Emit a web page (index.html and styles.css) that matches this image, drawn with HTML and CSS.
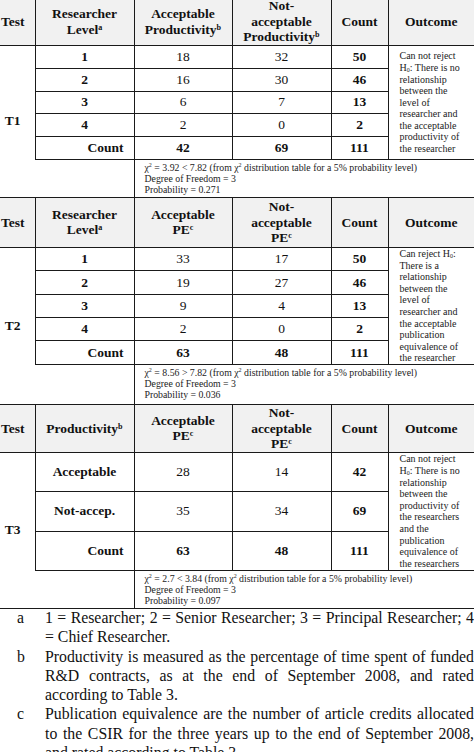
FILE: index.html
```html
<!DOCTYPE html>
<html>
<head>
<meta charset="utf-8">
<link rel="stylesheet" href="styles.css">
</head>
<body>
<table class="tbl">
<colgroup><col class="c1"><col class="c2"><col class="c3"><col class="c4"><col class="c5"><col class="c6"></colgroup>
<tr class="hd h48">
<th class="first">Test</th><th>Researcher<br>Level<sup>a</sup></th><th>Acceptable<br>Productivity<sup>b</sup></th><th>Not-<br>acceptable<br>Productivity<sup>b</sup></th><th>Count</th><th class="last">Outcome</th>
</tr>
<tr class="r5"><td class="test" rowspan="6">T1</td><td class="b">1</td><td>18</td><td>32</td><td class="b">50</td><td class="out" rowspan="5">Can not reject H<sub>0</sub>: There is no relationship between the level of researcher and the acceptable productivity of the researcher</td></tr>
<tr class="r5"><td class="b">2</td><td>16</td><td>30</td><td class="b">46</td></tr>
<tr class="r5"><td class="b">3</td><td>6</td><td>7</td><td class="b">13</td></tr>
<tr class="r5"><td class="b">4</td><td>2</td><td>0</td><td class="b">2</td></tr>
<tr class="r5"><td class="b lbl">Count</td><td class="b">42</td><td class="b">69</td><td class="b">111</td></tr>
<tr class="note n36"><td class="blank"></td><td class="nt" colspan="4">χ<sup>2</sup> = 3.92 &lt; 7.82 (from χ<sup>2</sup> distribution table for a 5% probability level)<br>Degree of Freedom = 3<br>Probability = 0.271</td></tr>

<tr class="hd h50">
<th class="first">Test</th><th>Researcher<br>Level<sup>a</sup></th><th>Acceptable<br>PE<sup>c</sup></th><th>Not-<br>acceptable<br>PE<sup>c</sup></th><th>Count</th><th class="last">Outcome</th>
</tr>
<tr class="r5"><td class="test" rowspan="6">T2</td><td class="b">1</td><td>33</td><td>17</td><td class="b">50</td><td class="out" rowspan="5">Can reject H<sub>0</sub>: There is a relationship between the level of researcher and the acceptable publication equivalence of the researcher</td></tr>
<tr class="r5"><td class="b">2</td><td>19</td><td>27</td><td class="b">46</td></tr>
<tr class="r5"><td class="b">3</td><td>9</td><td>4</td><td class="b">13</td></tr>
<tr class="r5"><td class="b">4</td><td>2</td><td>0</td><td class="b">2</td></tr>
<tr class="r5"><td class="b lbl">Count</td><td class="b">63</td><td class="b">48</td><td class="b">111</td></tr>
<tr class="note n38"><td class="blank"></td><td class="nt" colspan="4">χ<sup>2</sup> = 8.56 &gt; 7.82 (from χ<sup>2</sup> distribution table for a 5% probability level)<br>Degree of Freedom = 3<br>Probability = 0.036</td></tr>

<tr class="hd h48">
<th class="first">Test</th><th>Productivity<sup>b</sup></th><th>Acceptable<br>PE<sup>c</sup></th><th>Not-<br>acceptable<br>PE<sup>c</sup></th><th>Count</th><th class="last">Outcome</th>
</tr>
<tr class="r3"><td class="test" rowspan="4">T3</td><td class="b">Acceptable</td><td>28</td><td>14</td><td class="b">42</td><td class="out" rowspan="3">Can not reject H<sub>0</sub>: There is no relationship between the productivity of the researchers and the publication equivalence of the researchers</td></tr>
<tr class="r3"><td class="b">Not-accep.</td><td>35</td><td>34</td><td class="b">69</td></tr>
<tr class="r3"><td class="b lbl">Count</td><td class="b">63</td><td class="b">48</td><td class="b">111</td></tr>
<tr class="note n36"><td class="blank"></td><td class="nt" colspan="4">χ<sup>2</sup> = 2.7 &lt; 3.84 (from χ<sup>2</sup> distribution table for a 5% probability level)<br>Degree of Freedom = 3<br>Probability = 0.097</td></tr>
</table>

<div class="fns">
<div class="fn"><span class="key">a</span><span class="txt">1 = Researcher; 2 = Senior Researcher; 3 = Principal Researcher; 4 = Chief Researcher.</span></div>
<div class="fn"><span class="key">b</span><span class="txt">Productivity is measured as the percentage of time spent of funded R&amp;D contracts, as at the end of September 2008, and rated according to Table 3.</span></div>
<div class="fn"><span class="key">c</span><span class="txt">Publication equivalence are the number of article credits allocated to the CSIR for the three years up to the end of September 2008, and rated according to Table 3.</span></div>
</div>
</body>
</html>
```
FILE: styles.css
```css
html, body {
  margin: 0;
  padding: 0;
  background: #ffffff;
}
body {
  font-family: "Liberation Serif", "Times New Roman", serif;
  color: #111;
  width: 474px;
  overflow: hidden;
}
.tbl {
  border-collapse: collapse;
  table-layout: fixed;
  width: 474px;
  margin-top: -3px;
}
.c1 { width: 35px; }
.c2 { width: 99px; }
.c3 { width: 98px; }
.c4 { width: 99px; }
.c5 { width: 57px; }
.c6 { width: 86px; }

.tbl th, .tbl td {
  border: 1px solid #1a1a1a;
  padding: 0 4px;
  text-align: center;
  vertical-align: middle;
  font-size: 13.5px;
}
.tbl th {
  background: #f1f1f1;
  font-weight: bold;
  line-height: 15.5px;
}
.tbl th.first, .tbl td.test { border-left: none; padding: 0 9px 0 0; }
.tbl th.last, .tbl td.out, .tbl td.nt { border-right: none; }
.h48 th { height: 47px; }
.h50 th { height: 49px; }
.r5 td { height: 21.8px; line-height: 16px; }
.r3 td { height: 38.33px; line-height: 16px; }
.b { font-weight: bold; }
.tbl td.lbl { text-align: right; padding-right: 10px; }
.tbl td.test {
  font-weight: bold;
  border-right: none;
}
.tbl td.out {
  text-align: left;
  font-size: 10px;
  line-height: 11.6px;
  padding: 0 10px 0 11px;
  color: #222;
}
sub {
  font-size: 6px;
  vertical-align: -1px;
  line-height: 0;
}
sup {
  font-size: 0.6em;
  vertical-align: 0.55em;
  line-height: 0;
}
.tbl td.blank {
  border-left: none;
}
.n36 td { height: 35px; }
.n38 td { height: 37px; }
.tbl td.nt {
  text-align: left;
  vertical-align: top;
  font-size: 9.8px;
  line-height: 11px;
  padding: 2px 4px 0 10px;
  color: #222;
}
.nt sup { font-size: 6px; vertical-align: 4px; }

.fns {
  margin-top: -1px;
  font-size: 15.8px;
  line-height: 19.3px;
}
.fn {
  display: grid;
  grid-template-columns: 28px 1fr;
  padding-left: 17px;
}
.fn .txt {
  text-align: justify;
}
```
